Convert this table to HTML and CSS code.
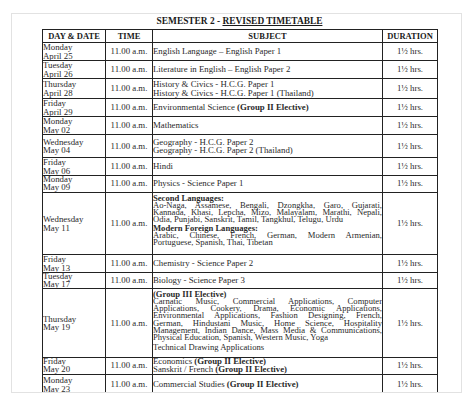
FILE: index.html
```html
<!DOCTYPE html>
<html>
<head>
<meta charset="utf-8">
<link rel="stylesheet" href="styles.css">
</head>
<body>
<div class="frame">
  <h1 class="title">SEMESTER 2 - <u>REVISED TIMETABLE</u></h1>
  <table class="tt">
    <colgroup><col class="c1"><col class="c2"><col class="c3"><col class="c4"></colgroup>
    <thead>
      <tr class="h13"><th>DAY &amp; DATE</th><th>TIME</th><th>SUBJECT</th><th>DURATION</th></tr>
    </thead>
    <tbody>
      <tr class="h18"><td class="day">Monday<br>April 25</td><td class="time">11.00 a.m.</td><td class="subj">English Language – English Paper 1</td><td class="dur">1½ hrs.</td></tr>
      <tr class="h18"><td class="day">Tuesday<br>April 26</td><td class="time">11.00 a.m.</td><td class="subj">Literature in English – English Paper 2</td><td class="dur">1½ hrs.</td></tr>
      <tr class="h20"><td class="day">Thursday<br>April 28</td><td class="time">11.00 a.m.</td><td class="subj">History &amp; Civics - H.C.G. Paper 1<br>History &amp; Civics - H.C.G. Paper 1 (Thailand)</td><td class="dur">1½ hrs.</td></tr>
      <tr class="h18"><td class="day">Friday<br>April 29</td><td class="time">11.00 a.m.</td><td class="subj">Environmental Science <b>(Group II Elective)</b></td><td class="dur">1½ hrs.</td></tr>
      <tr class="h18"><td class="day">Monday<br>May 02</td><td class="time">11.00 a.m.</td><td class="subj">Mathematics</td><td class="dur">1½ hrs.</td></tr>
      <tr class="h23"><td class="day">Wednesday<br>May 04</td><td class="time">11.00 a.m.</td><td class="subj">Geography - H.C.G. Paper 2<br>Geography - H.C.G. Paper 2 (Thailand)</td><td class="dur">1½ hrs.</td></tr>
      <tr class="h18"><td class="day">Friday<br>May 06</td><td class="time">11.00 a.m.</td><td class="subj">Hindi</td><td class="dur">1½ hrs.</td></tr>
      <tr class="h17"><td class="day">Monday<br>May 09</td><td class="time">11.00 a.m.</td><td class="subj">Physics - Science Paper 1</td><td class="dur">1½ hrs.</td></tr>
      <tr class="h62"><td class="day">Wednesday<br>May 11</td><td class="time">11.00 a.m.</td>
        <td class="subj dense">
          <div class="para"><b>Second Languages:</b>
            <span class="jl">Ao-Naga, Assamese, Bengali, Dzongkha, Garo, Gujarati,</span>
            <span class="jl">Kannada, Khasi, Lepcha, Mizo, Malayalam, Marathi, Nepali,</span>
            <span class="ln">Odia, Punjabi, Sanskrit, Tamil, Tangkhul, Telugu, Urdu</span></div>
          <div class="para gap1"><b>Modern Foreign Languages:</b>
            <span class="jl">Arabic, Chinese, French, German, Modern Armenian,</span>
            <span class="ln">Portuguese, Spanish, Thai, Tibetan</span></div>
        </td><td class="dur">1½ hrs.</td></tr>
      <tr class="h18"><td class="day">Friday<br>May 13</td><td class="time">11.00 a.m.</td><td class="subj">Chemistry - Science Paper 2</td><td class="dur">1½ hrs.</td></tr>
      <tr class="h16"><td class="day">Tuesday<br>May 17</td><td class="time">11.00 a.m.</td><td class="subj">Biology - Science Paper 3</td><td class="dur">1½ hrs.</td></tr>
      <tr class="h69"><td class="day">Thursday<br>May 19</td><td class="time">11.00 a.m.</td>
        <td class="subj dense">
          <div class="para"><b>(Group III Elective)</b>
            <span class="jl">Carnatic Music, Commercial Applications, Computer</span>
            <span class="jl">Applications, Cookery, Drama, Economic Applications,</span>
            <span class="jl">Environmental Applications, Fashion Designing, French,</span>
            <span class="jl">German, Hindustani Music, Home Science, Hospitality</span>
            <span class="jl">Management, Indian Dance, Mass Media &amp; Communications,</span>
            <span class="ln">Physical Education, Spanish, Western Music, Yoga</span></div>
          <div class="para gap3">Technical Drawing Applications</div>
        </td><td class="dur">1½ hrs.</td></tr>
      <tr class="h17"><td class="day">Friday<br>May 20</td><td class="time">11.00 a.m.</td><td class="subj">Economics <b>(Group II Elective)</b><br>Sanskrit / French <b>(Group II Elective)</b></td><td class="dur">1½ hrs.</td></tr>
      <tr class="h20"><td class="day">Monday<br>May 23</td><td class="time">11.00 a.m.</td><td class="subj">Commercial Studies <b>(Group II Elective)</b></td><td class="dur">1½ hrs.</td></tr>
    </tbody>
  </table>
</div>
</body>
</html>
```

FILE: styles.css
```css
* { box-sizing: border-box; }

body {
  margin: 0;
  background: #ffffff;
  font-family: "Liberation Serif", "Times New Roman", serif;
  color: #2a2a2a;
}

.frame {
  margin: 13px 0 0 11px;
  width: 451px;
  height: 380px;
  border: 1px solid #e2e2e2;
  overflow: hidden;
  padding: 0 0 0 30px;
}

.title {
  margin: 0;
  width: 395px;
  height: 15px;
  padding-top: 2px;
  font-size: 9.4px;
  line-height: 10px;
  font-weight: bold;
  text-align: center;
  color: #1a1a1a;
}

.tt {
  border-collapse: collapse;
  table-layout: fixed;
  width: 395px;
  font-size: 8.8px;
}

.c1 { width: 63px; }
.c2 { width: 47px; }
.c3 { width: 230px; }
.c4 { width: 55px; }

.tt th,
.tt td {
  border: 1px solid #222222;
  padding: 0;
  vertical-align: middle;
}

.tt th {
  font-size: 8.5px;
  line-height: 9px;
  font-weight: bold;
  text-align: center;
  color: #1a1a1a;
}

.h13 { height: 13px; }
.h16 { height: 16px; }
.h17 { height: 17px; }
.h18 { height: 18px; }
.h20 { height: 20px; }
.h23 { height: 23px; }
.h62 { height: 62px; }
.h69 { height: 69px; }

.day {
  padding: 0 2px 0 4px;
  line-height: 8.5px;
  text-align: left;
}

.time,
.dur {
  text-align: center;
  line-height: 8.5px;
}

.subj {
  padding: 0 2px 0 3px;
  line-height: 8.5px;
  text-align: left;
}

.h17 td { line-height: 7.9px; }
.h16 td { line-height: 7.3px; }

.tt td.dense {
  vertical-align: top;
  font-size: 8.6px;
  line-height: 7.2px;
  padding-top: 1.8px;
}

.gap1 { margin-top: 1.2px; }
.gap3 { margin-top: 3px; }

.para b,
.jl,
.ln { display: block; }

.jl {
  text-align: justify;
  text-align-last: justify;
}
```
